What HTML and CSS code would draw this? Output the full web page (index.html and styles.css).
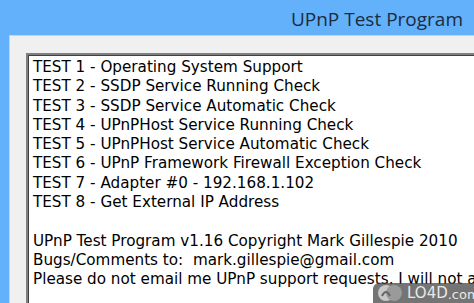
FILE: index.html
```html
<!DOCTYPE html>
<html>
<head>
<meta charset="utf-8">
<link rel="stylesheet" href="styles.css">
</head>
<body>
<div class="desktop">
  <div class="titlebar"><span class="title">UPnP Test Program</span></div>
  <div class="window">
    <div class="client">
      <div class="textbox">
        <div class="line">TEST 1 - Operating System Support</div>
        <div class="line">TEST 2 - SSDP Service Running Check</div>
        <div class="line">TEST 3 - SSDP Service Automatic Check</div>
        <div class="line">TEST 4 - UPnPHost Service Running Check</div>
        <div class="line">TEST 5 - UPnPHost Service Automatic Check</div>
        <div class="line">TEST 6 - UPnP Framework Firewall Exception Check</div>
        <div class="line">TEST 7 - Adapter #0 - 192.168.1.102</div>
        <div class="line">TEST 8 - Get External IP Address</div>
        <div class="line">&nbsp;</div>
        <div class="line">UPnP Test Program v1.16 Copyright Mark Gillespie 2010</div>
        <div class="line">Bugs/Comments to:&nbsp; mark.gillespie@gmail.com</div>
        <div class="line">Please do not email me UPnP support requests. I will not answer them.</div>
      </div>
    </div>
  </div>
  <div class="watermark">
    <svg class="wm-logo" width="26" height="18" viewBox="0 0 26 18">
      <circle cx="9" cy="9" r="8" fill="#c8c8c8"/>
      <circle cx="17" cy="9" r="8" fill="#9a9a9a"/>
      <path d="M5 12 Q9 4 13 12" fill="none" stroke="#666" stroke-width="2"/>
    </svg>
    <span class="wm-text">LO4D</span><span class="wm-com">.com</span>
  </div>
</div>
</body>
</html>
```
FILE: styles.css
```css
html, body {
  margin: 0;
  padding: 0;
  width: 474px;
  height: 303px;
  overflow: hidden;
}
.desktop {
  position: relative;
  width: 474px;
  height: 303px;
  background: #62b1fa;
  display: flex;
  flex-direction: column;
}
.titlebar {
  height: 35px;
  display: flex;
  justify-content: flex-end;
  align-items: center;
  padding-right: 11px;
}
.title {
  font-family: "Open Sans", "Noto Sans", sans-serif;
  font-size: 19px;
  color: #1c2b3d;
  margin-top: 2px;
}
.window {
  flex: 1;
  margin-left: 9px;
  border-top: 1px solid #b4d8fb;
  border-left: 1px solid #b4d8fb;
  background: #f0f0f0;
  display: flex;
}
.client {
  flex: 1;
  padding: 17px 0 0 16px;
  display: flex;
}
.textbox {
  flex: 1;
  background: #ffffff;
  border-top: 2px solid #808080;
  border-left: 2px solid #808080;
  box-shadow: inset 1px 1px 0 #404040;
  padding: 3px 0 0 5px;
  font-family: "DejaVu Sans", sans-serif;
  font-size: 15.2px;
  line-height: 19.3px;
  color: #000;
  white-space: nowrap;
  overflow: hidden;
}
.watermark {
  position: absolute;
  left: 373px;
  top: 283px;
  width: 110px;
  height: 26px;
  border-radius: 6px;
  background: rgba(70, 70, 70, 0.75);
  display: flex;
  align-items: center;
  padding-left: 4px;
  box-sizing: border-box;
}
.wm-logo {
  margin-right: 4px;
  margin-top: -6px;
}
.wm-text {
  font-family: "DejaVu Sans", sans-serif;
  font-size: 15px;
  color: #e8e8e8;
  margin-top: -6px;
}
.wm-com {
  font-family: "DejaVu Sans", sans-serif;
  font-size: 13px;
  color: #e8e8e8;
  margin-top: -4px;
}
```
